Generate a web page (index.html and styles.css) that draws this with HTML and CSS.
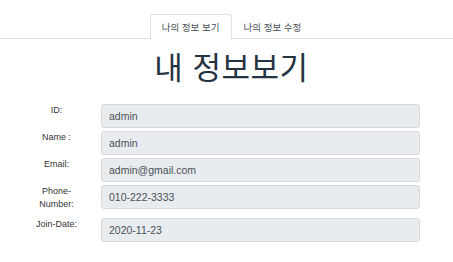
FILE: index.html
```html
<!DOCTYPE html>
<html lang="ko">
<head>
    <meta charset="UTF-8">
    <meta name="viewport" content="width=device-width, initial-scale=1.0">
    <title>내 정보보기</title>
    <link rel="stylesheet" href="styles.css">
</head>
<body>
    <ul class="nav-tabs">
        <li class="nav-item"><a href="#" class="nav-link active">나의 정보 보기</a></li>
        <li class="nav-item"><a href="#" class="nav-link">나의 정보 수정</a></li>
    </ul>

    <h1 class="page-title">내 정보보기</h1>

    <form class="info-form">
        <div class="form-row">
            <label class="form-label">ID:</label>
            <input class="form-input" type="text" value="admin" readonly>
        </div>
        <div class="form-row">
            <label class="form-label">Name :</label>
            <input class="form-input" type="text" value="admin" readonly>
        </div>
        <div class="form-row">
            <label class="form-label">Email:</label>
            <input class="form-input" type="text" value="admin@gmail.com" readonly>
        </div>
        <div class="form-row">
            <label class="form-label">Phone-<br>Number:</label>
            <input class="form-input" type="text" value="010-222-3333" readonly>
        </div>
        <div class="form-row">
            <label class="form-label">Join-Date:</label>
            <input class="form-input" type="text" value="2020-11-23" readonly>
        </div>
    </form>
</body>
</html>
```

FILE: styles.css
```css
body {
    margin: 0;
    padding: 0;
    background: #fff;
    font-family: "Liberation Sans", Arial, sans-serif;
}

    .nav-tabs {
        list-style: none;
        margin: 14px 0 0 0;
        padding: 0 0 0 10px;
        display: flex;
        justify-content: center;
        border-bottom: 1px solid #dee2e6;
    }
    .nav-item {
        margin-bottom: -1px;
    }
    .nav-link {
        display: block;
        padding: 0 11px;
        height: 24px;
        line-height: 24px;
        font-family: "Noto Sans CJK KR", sans-serif;
        font-size: 9.5px;
        color: #495057;
        text-decoration: none;
        border: 1px solid transparent;
        border-bottom: none;
        border-radius: 3px 3px 0 0;
    }
    .nav-link.active {
        border-color: #dee2e6;
        background: #fff;
    }
    .page-title {
        margin: 0 0 0 10px;
        text-align: center;
        font-family: "Noto Sans CJK KR", sans-serif;
        font-weight: 400;
        font-size: 31px;
        letter-spacing: 0.5px;
        line-height: 54px;
        color: #243342;
    }
    .info-form {
        padding: 11px 33px 0 12px;
        display: flex;
        flex-direction: column;
        gap: 3px;
    }
    .form-row {
        display: flex;
        align-items: flex-start;
    }
    .form-label {
        width: 89px;
        flex-shrink: 0;
        text-align: center;
        font-size: 9px;
        line-height: 13px;
        padding-bottom: 4px;
        color: #333;
    }
    .form-input {
        flex: 1;
        min-width: 0;
        height: 24px;
        box-sizing: border-box;
        padding: 0 7px;
        font-family: "Liberation Sans", Arial, sans-serif;
        font-size: 10.5px;
        color: #495057;
        background: #e9ecef;
        border: 1px solid #d6dadf;
        border-radius: 3px;
        outline: none;
    }
```
